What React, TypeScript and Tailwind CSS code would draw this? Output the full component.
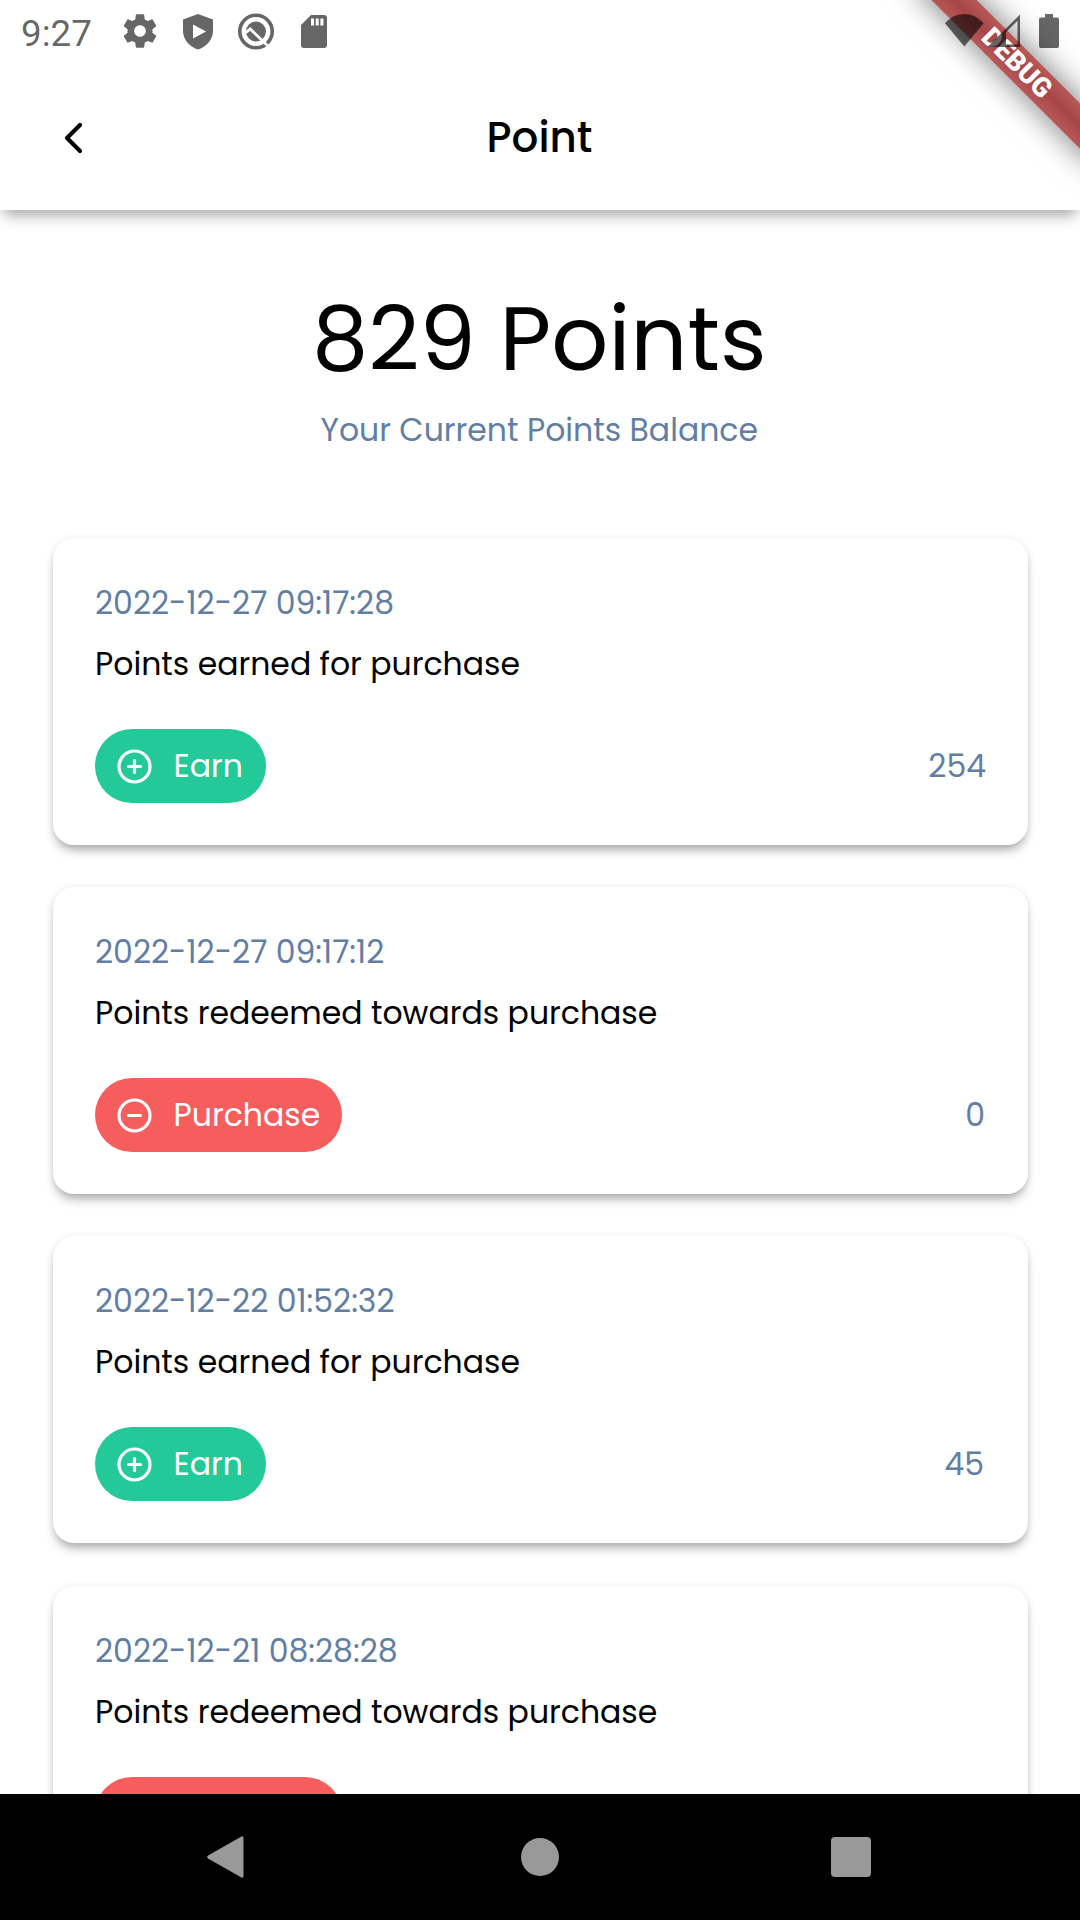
import React from 'react';
import clsx from 'clsx';

type PointType = 'earn' | 'purchase';

interface PointEntry {
  date: string;
  type: PointType;
  amount: string;
  amountClass?: string;
}

const entries: PointEntry[] = [
  { date: '2022-12-27 09:17:28', type: 'earn', amount: '254' },
  { date: '2022-12-27 09:17:12', type: 'purchase', amount: '0', amountClass: 'pr-px' },
  { date: '2022-12-22 01:52:32', type: 'earn', amount: '45', amountClass: 'pr-[2px]' },
  { date: '2022-12-21 08:28:28', type: 'purchase', amount: '0', amountClass: 'pr-px' },
];

const types = {
  earn: {
    label: 'Earn',
    description: 'Points earned for purchase',
    badgeClass: 'w-[171px] bg-[#23c999]',
  },
  purchase: {
    label: 'Purchase',
    description: 'Points redeemed towards purchase',
    badgeClass: 'w-[247px] bg-[#f65d5d]',
  },
};

function StatusBar() {
  return (
    <div className="relative z-20 flex h-[63px] justify-between pt-[11px] pr-[11px] pl-[21px] text-black/60">
      <div className="flex">
        <span className="w-[99px] pt-px font-['Roboto',sans-serif] text-[36.75px] leading-[43px]">9:27</span>
        <div className="flex gap-[18px]">
          <svg className="size-[40px]" viewBox="0 0 24 24" fill="currentColor">
            <path d="M19.43 12.98c.04-.32.07-.64.07-.98s-.03-.66-.07-.98l2.11-1.65c.19-.15.24-.42.12-.64l-2-3.46c-.12-.22-.39-.3-.61-.22l-2.49 1c-.52-.4-1.08-.73-1.69-.98l-.38-2.65C14.46 2.18 14.25 2 14 2h-4c-.25 0-.46.18-.49.42l-.38 2.65c-.61.25-1.17.59-1.69.98l-2.49-1c-.23-.09-.49 0-.61.22l-2 3.46c-.13.22-.07.49.12.64l2.11 1.65c-.04.32-.07.65-.07.98s.03.66.07.98l-2.11 1.65c-.19.15-.24.42-.12.64l2 3.46c.12.22.39.3.61.22l2.49-1c.52.4 1.08.73 1.69.98l.38 2.65c.03.24.24.42.49.42h4c.25 0 .46-.18.49-.42l.38-2.65c.61-.25 1.17-.59 1.69-.98l2.49 1c.23.09.49 0 .61-.22l2-3.46c.12-.22.07-.49-.12-.64l-2.11-1.65zM12 15.5c-1.93 0-3.5-1.57-3.5-3.5s1.57-3.5 3.5-3.5 3.5 1.57 3.5 3.5-1.57 3.5-3.5 3.5z" />
          </svg>
          <svg className="size-[40px]" viewBox="0 0 40 40" fill="currentColor" fillRule="evenodd">
            <path d="M20 3 35 8.5V20c0 8-6 15.5-15 18.5C11 35.5 5 28 5 20V8.5zM15 13.5v14L28 20.5z" />
          </svg>
          <svg className="size-[40px]" viewBox="0 0 40 40" fill="none">
            <circle cx="20" cy="20.5" r="16.2" stroke="#666" strokeWidth="3.6" />
            <circle cx="20" cy="20.5" r="10" fill="#666" />
            <path d="M10 21.5 14.2 18 32.500 35.500" stroke="#fff" strokeWidth="2.800" />
          </svg>
          <svg className="size-[40px]" viewBox="0 0 40 40" fill="currentColor" fillRule="evenodd">
            <path d="M17 4h13a3 3 0 0 1 3 3v27a3 3 0 0 1-3 3H10a3 3 0 0 1-3-3V14zM17 7.5v7h3v-7zM21.7 7.5v7h3v-7zM26.4 7.5v7h3v-7z" />
          </svg>
        </div>
      </div>
      <div className="flex">
        <svg className="size-[40px]" viewBox="0 0 40 40" fill="currentColor">
          <path d="M20.3 35.5 1 12.3C6.5 6 13.5 3 20.3 3s13.5 3 19.3 9.3z" />
        </svg>
        <svg className="size-[40px]" viewBox="0 0 40 40" fill="currentColor" fillRule="evenodd">
          <path d="M3.5 36 36 3.5V36zM22 21v12.5h11.500V9.700z" />
        </svg>
        <svg className="ml-[5px] size-[40px]" viewBox="0 0 40 40" fill="currentColor">
          <path d="M16 3h8v3.5h4a2 2 0 0 1 2 2V35a2 2 0 0 1-2 2H12a2 2 0 0 1-2-2V8.5a2 2 0 0 1 2-2h4z" />
        </svg>
      </div>
    </div>
  );
}

function DebugBanner() {
  return (
    <div className="pointer-events-none absolute top-0 right-0 z-10 size-[210px] overflow-hidden">
      <div className="absolute top-[46.5px] left-[17px] flex h-[32px] w-[260px] rotate-45 items-center justify-center bg-linear-to-b from-[#b95757] via-[#a64747] to-[#b95757] shadow-[0_0_32px_rgba(0,0,0,0.55)]">
        <span className="font-['Roboto',sans-serif] text-[27px] leading-none font-black text-white">DEBUG</span>
      </div>
    </div>
  );
}

function Header() {
  return (
    <header className="relative h-[210px] bg-white shadow-[0_9px_14px_-4px_rgba(0,0,0,0.36)]">
      <StatusBar />
      <div className="grid h-[147px] grid-cols-[140px_1fr_141px] items-center">
        <svg className="mt-[3px] ml-[52px] size-[42px]" viewBox="0 0 42 42" fill="none" stroke="#000" strokeWidth="4.2" strokeLinecap="round" strokeLinejoin="round">
          <path d="M28 8 15 21 28 34" />
        </svg>
        <h1 className="pt-[2px] text-center text-[42px] leading-[63px] font-medium">Point</h1>
      </div>
      <DebugBanner />
    </header>
  );
}

function TypeIcon({ type }: { type: PointType }) {
  return (
    <svg className="size-[36px]" viewBox="0 0 36 36" fill="none" stroke="currentColor" strokeWidth="3.2" strokeLinecap="round">
      <circle cx="17.5" cy="18.5" r="15.5" />
      <path d="M11.5 18.5h12" />
      {type === 'earn' && <path d="M17.5 12.5v12" />}
    </svg>
  );
}

function PointCard({ entry }: { entry: PointEntry }) {
  const { label, description, badgeClass } = types[entry.type];

  return (
    <div className="h-[307px] shrink-0 rounded-[21px] bg-white px-[42px] pt-[42px] text-[31.5px] leading-[46px] shadow-[0_8px_11px_-3px_rgba(0,0,0,0.3),0_1px_7px_rgba(0,0,0,0.1)]">
      <p className="text-[#627ea3]">{entry.date}</p>
      <p className="mt-[15px]">{description}</p>
      <div className="mt-[42px] flex items-center justify-between">
        <div className={clsx('flex h-[74px] items-center gap-[20.5px] rounded-full pl-[22px] text-white', badgeClass)}>
          <TypeIcon type={entry.type} />
          <span>{label}</span>
        </div>
        <span className={clsx('text-[#627ea3]', entry.amountClass)}>{entry.amount}</span>
      </div>
    </div>
  );
}

function NavBar() {
  return (
    <nav className="flex h-[126px] items-center justify-between bg-black px-[204px] text-[#999]">
      <svg className="size-[44px]" viewBox="0 0 44 44" fill="currentColor">
        <path d="M37.5 1.5a1.5 1.5 0 0 1 2 1.4v38.2a1.5 1.5 0 0 1-2 1.4L4 23.5a1.8 1.8 0 0 1 0-3z" />
      </svg>
      <div className="ml-px size-[38px] rounded-full bg-current" />
      <div className="mr-[5px] size-[40px] rounded-[4px] bg-current" />
    </nav>
  );
}

export default function App() {
  return (
    <div className="flex h-[1920px] w-[1080px] flex-col overflow-hidden bg-white font-['Poppins',sans-serif] text-black">
      <Header />
      <main className="flex min-h-0 flex-1 flex-col overflow-hidden pr-[52px] pl-[53px]">
        <section className="pt-[64px] pr-[2.5px] text-center">
          <h2 className="text-[89.25px] leading-[130px]">829 Points</h2>
          <p className="mt-[3px] text-[31.5px] leading-[46px] text-[#627ea3]">Your Current Points Balance</p>
        </section>
        <section className="mt-[85px] flex flex-col gap-[42.2px]">
          {entries.map((entry) => (
            <PointCard key={entry.date} entry={entry} />
          ))}
        </section>
      </main>
      <NavBar />
    </div>
  );
}
